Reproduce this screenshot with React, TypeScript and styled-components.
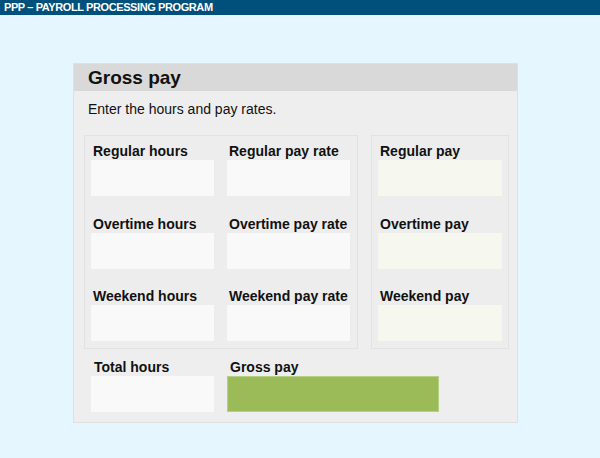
import { createGlobalStyle } from 'styled-components';
import styled from 'styled-components';

const GlobalStyle = createGlobalStyle`
  html, body {
    margin: 0;
    padding: 0;
    background: #e6f6fe;
    font-family: 'Liberation Sans', Arial, sans-serif;
  }
`;

const Page = styled.div`
  width: 600px;
  height: 458px;
  display: flex;
  flex-direction: column;
  background: #e6f6fe;
`;

const TopBar = styled.div`
  height: 15px;
  background: #01507b;
  color: #ffffff;
  font-size: 11px;
  font-weight: 700;
  letter-spacing: -0.4px;
  line-height: 15px;
  padding-left: 4px;
  white-space: nowrap;
`;

const Panel = styled.section`
  width: 445px;
  margin: 48px 0 0 73px;
  box-sizing: border-box;
  border: 1px solid #e0e0e0;
  background: #eeeeee;
`;

const PanelHeader = styled.div`
  height: 27px;
  background: #d9d9d9;
  padding-left: 14px;
  font-size: 19px;
  font-weight: 700;
  line-height: 27px;
  color: #111111;
`;

const PanelBody = styled.div`
  padding: 8px 9px 10px 10px;
`;

const Intro = styled.div`
  font-size: 14px;
  line-height: 20px;
  color: #111111;
  padding-left: 4px;
  margin-bottom: 16px;
`;

const Groups = styled.div`
  display: flex;
  gap: 13px;
`;

const Group = styled.div<{ $cols: number }>`
  display: grid;
  grid-template-columns: repeat(${({ $cols }) => $cols}, 123px);
  column-gap: 13px;
  row-gap: 17.5px;
  padding: 5px 7px 7px 6px;
  border: 1px solid #e2e2e2;
  background: #ededed;
`;

const Field = styled.div`
  display: flex;
  flex-direction: column;
`;

const Label = styled.div`
  font-size: 14px;
  font-weight: 700;
  line-height: 18px;
  padding-top: 1px;
  color: #111111;
  padding-left: 2px;
  white-space: nowrap;
`;

const Input = styled.div<{ $tone: 'plain' | 'result' | 'total'; $width?: number }>`
  height: 36px;
  width: ${({ $width }) => $width ?? 123}px;
  box-sizing: border-box;
  background: ${({ $tone }) =>
    $tone === 'plain' ? '#f9f9f9' : $tone === 'result' ? '#f6f7ef' : '#9bbb59'};
  border: 1px solid
    ${({ $tone }) => ($tone === 'total' ? '#b7cf85' : 'transparent')};
`;

const Totals = styled.div`
  display: flex;
  gap: 13px;
  padding: 8px 0 0 7px;
`;

const TotalLabel = styled(Label)`
  padding-left: 3px;
  padding-top: 2px;
  line-height: 17px;
`;

const inputs: [string, string][] = [
  ['Regular hours', 'Regular pay rate'],
  ['Overtime hours', 'Overtime pay rate'],
  ['Weekend hours', 'Weekend pay rate'],
];

const results = ['Regular pay', 'Overtime pay', 'Weekend pay'];

export default function App() {
  return (
    <Page>
      <GlobalStyle />
      <TopBar>PPP – PAYROLL PROCESSING PROGRAM</TopBar>
      <Panel>
        <PanelHeader>Gross pay</PanelHeader>
        <PanelBody>
          <Intro>Enter the hours and pay rates.</Intro>
          <Groups>
            <Group $cols={2}>
              {inputs.flat().map(name => (
                <Field key={name}>
                  <Label>{name}</Label>
                  <Input $tone="plain" />
                </Field>
              ))}
            </Group>
            <Group $cols={1}>
              {results.map(name => (
                <Field key={name}>
                  <Label>{name}</Label>
                  <Input $tone="result" $width={124} />
                </Field>
              ))}
            </Group>
          </Groups>
          <Totals>
            <Field>
              <TotalLabel>Total hours</TotalLabel>
              <Input $tone="plain" />
            </Field>
            <Field>
              <TotalLabel>Gross pay</TotalLabel>
              <Input $tone="total" $width={212} />
            </Field>
          </Totals>
        </PanelBody>
      </Panel>
    </Page>
  );
}
